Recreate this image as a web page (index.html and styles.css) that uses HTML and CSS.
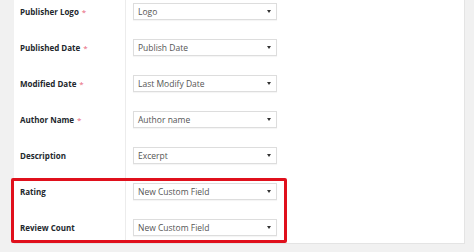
FILE: index.html
```html
<!DOCTYPE html>
<html lang="en">
<head>
  <meta charset="UTF-8" />
  <title>Schema Fields</title>
  <link rel="stylesheet" href="styles.css">
</head>
<body>
  <main class="panel">
    <div class="fields">
      <div class="field">
        <label class="field-label">Publisher Logo <span class="req">*</span></label>
        <div class="field-input"><div class="select"><span>Logo</span><span class="arrow"></span></div></div>
      </div>
      <div class="field">
        <label class="field-label">Published Date <span class="req">*</span></label>
        <div class="field-input"><div class="select"><span>Publish Date</span><span class="arrow"></span></div></div>
      </div>
      <div class="field">
        <label class="field-label">Modified Date <span class="req">*</span></label>
        <div class="field-input"><div class="select"><span>Last Modify Date</span><span class="arrow"></span></div></div>
      </div>
      <div class="field">
        <label class="field-label">Author Name <span class="req">*</span></label>
        <div class="field-input"><div class="select"><span>Author name</span><span class="arrow"></span></div></div>
      </div>
      <div class="field">
        <label class="field-label">Description</label>
        <div class="field-input"><div class="select"><span>Excerpt</span><span class="arrow"></span></div></div>
      </div>
      <div class="field">
        <label class="field-label">Rating</label>
        <div class="field-input"><div class="select"><span>New Custom Field</span><span class="arrow"></span></div></div>
      </div>
      <div class="field">
        <label class="field-label">Review Count</label>
        <div class="field-input"><div class="select"><span>New Custom Field</span><span class="arrow"></span></div></div>
      </div>
    </div>
  </main>

  <!-- highlight around the new fields -->
  <div class="highlight"></div>
</body>
</html>
```

FILE: styles.css
```css
:root {
  --bg: #f1f1f1;
  --panel: #fff;
  --line: #ececec;
  --text: #23282d;
  --muted: #555;
  --req: #e8647a;
  --mark: #e0101c;
}

body {
  margin: 0;
  background: var(--bg);
  font-family: 'Open Sans', 'Noto Sans', sans-serif;
  color: var(--text);
  position: relative;
  height: 252px;
  overflow: hidden;
}

.panel {
  margin-left: 14px;
  width: 450px;
  height: 243px;
  background: var(--panel);
  border-right: 1px solid #e4e4e4;
  border-bottom: 1px solid #e4e4e4;
  overflow: hidden;
}

.fields {
  margin-top: -7px;
}

.field {
  display: grid;
  grid-template-columns: 112px 1fr;
  height: 36px;
}

.field-label {
  display: flex;
  align-items: center;
  padding-left: 6px;
  font-size: 8px;
  font-weight: 700;
  border-right: 1px solid var(--line);
}

.req {
  color: var(--req);
  margin-left: 3px;
  font-weight: 400;
}

.field-input {
  display: flex;
  align-items: center;
  padding-left: 7px;
}

.select {
  width: 144px;
  height: 17px;
  box-sizing: border-box;
  border: 1px solid #ddd;
  box-shadow: 0 1px 1px rgba(0,0,0,0.04);
  display: flex;
  align-items: center;
  justify-content: space-between;
  padding: 0 5px 0 4px;
  font-size: 8.5px;
  color: var(--muted);
}

.arrow {
  width: 0;
  height: 0;
  border-left: 2px solid transparent;
  border-right: 2px solid transparent;
  border-top: 3px solid #333;
}

.highlight {
  position: absolute;
  left: 11px;
  top: 178px;
  width: 276px;
  height: 65px;
  box-sizing: border-box;
  border: 3px solid var(--mark);
  border-radius: 2px;
}
```
